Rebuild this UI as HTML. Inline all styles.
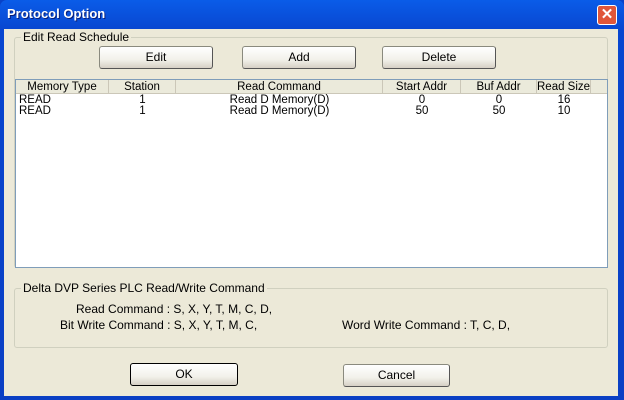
<!DOCTYPE html>
<html><head><style>
*{box-sizing:border-box;margin:0;padding:0}
body{width:624px;height:400px;overflow:hidden;font-family:"Liberation Sans",Arial,sans-serif;font-size:11px;color:#000;background:#0842c8}
.win{position:absolute;left:0;top:0;width:624px;height:400px;background:linear-gradient(#0a5ce8,#0846d0 30px,#0a3fc4);border-radius:7px 7px 0 0}
.title{position:absolute;left:7px;top:6px;color:#fff;font-weight:bold;font-size:13px;text-shadow:1px 1px #0a1f78}
.close{position:absolute;left:597px;top:5px;width:20px;height:20px;background:#e0563a;border:1px solid #fff;border-radius:3px;color:#fff;font-weight:bold;font-size:15px;line-height:17px;text-align:center}
.body{position:absolute;left:4px;top:29px;width:614px;height:367px;background:#ece9d8}
.grp{position:absolute;border:1px solid #d0d0bf;border-radius:3px}
.gl{position:absolute;top:-8px;left:6px;background:#ece9d8;padding:0 2px;font-size:12px;white-space:nowrap}
.btn{position:absolute;height:23px;border:1px solid #003c74;border-radius:3px;background:linear-gradient(#fff,#f2f1ea 60%,#d6d0c5);text-align:center;line-height:21px;font-size:12px;border-color:#8a8a7e #555 #555 #8a8a7e}
.list{position:absolute;left:15px;top:79px;width:593px;height:189px;background:#fff;border:1px solid #7f9db9}
.hdr{position:absolute;left:0;top:0;height:14px;width:100%;background:#ebeadb;border-bottom:1px solid #cbc7b8}
.h{position:absolute;top:0;height:14px;line-height:14px;text-align:center;border-right:1px solid #cbc7b8;font-size:11.5px;white-space:nowrap;overflow:hidden}
.c{position:absolute;height:11px;line-height:11px;font-size:11.5px;text-align:center;white-space:nowrap}
.t{position:absolute;font-size:12px;white-space:nowrap}
</style></head><body>
<div class="win">
<div class="title">Protocol Option</div>
<div class="close">✕</div>
</div>
<div class="body"></div>
<div class="grp" style="left:14px;top:37px;width:594px;height:231px"><div class="gl">Edit Read Schedule</div></div>
<div class="btn" style="left:99px;top:46px;width:114px">Edit</div>
<div class="btn" style="left:242px;top:46px;width:114px">Add</div>
<div class="btn" style="left:382px;top:46px;width:114px">Delete</div>
<div class="list">
<div class="hdr">
<div class="h" style="left:0;width:93px">Memory Type</div>
<div class="h" style="left:93px;width:67px">Station</div>
<div class="h" style="left:160px;width:207px">Read Command</div>
<div class="h" style="left:367px;width:78px">Start Addr</div>
<div class="h" style="left:445px;width:76px">Buf Addr</div>
<div class="h" style="left:521px;width:54px">Read Size</div>
</div>
<div class="c" style="left:3px;top:15px">READ</div>
<div class="c" style="left:93px;top:15px;width:67px">1</div>
<div class="c" style="left:160px;top:15px;width:207px">Read D Memory(D)</div>
<div class="c" style="left:367px;top:15px;width:78px">0</div>
<div class="c" style="left:445px;top:15px;width:76px">0</div>
<div class="c" style="left:521px;top:15px;width:54px">16</div>
<div class="c" style="left:3px;top:26px">READ</div>
<div class="c" style="left:93px;top:26px;width:67px">1</div>
<div class="c" style="left:160px;top:26px;width:207px">Read D Memory(D)</div>
<div class="c" style="left:367px;top:26px;width:78px">50</div>
<div class="c" style="left:445px;top:26px;width:76px">50</div>
<div class="c" style="left:521px;top:26px;width:54px">10</div>
</div>
<div class="grp" style="left:14px;top:288px;width:594px;height:60px"><div class="gl">Delta DVP Series PLC Read/Write Command</div></div>
<div class="t" style="left:76px;top:302px">Read Command : S, X, Y, T, M, C, D,</div>
<div class="t" style="left:60px;top:318px">Bit Write Command : S, X, Y, T, M, C,</div>
<div class="t" style="left:342px;top:318px">Word Write Command : T, C, D,</div>
<div class="btn" style="left:130px;top:363px;width:108px;border:1px solid #000">OK</div>
<div class="btn" style="left:343px;top:364px;width:107px">Cancel</div>
</body></html>
